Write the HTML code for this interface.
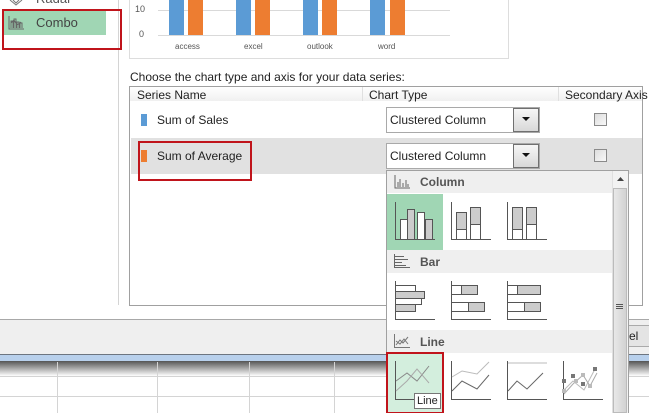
<!DOCTYPE html>
<html><head><style>
*{margin:0;padding:0;box-sizing:border-box}
html,body{width:649px;height:413px;overflow:hidden}
body{background:#fff;position:relative;font-family:"Liberation Sans",sans-serif;font-size:12px;color:#222}
.a{position:absolute}
.t{position:absolute;white-space:nowrap}
</style></head><body>
<div class="a" style="left:118px;top:0;width:1px;height:305px;background:#d4d4d4"></div>
<div class="t" style="left:36px;top:-9px;color:#555;font-size:13px">Radar</div>
<svg class="a" style="left:9px;top:0" width="14" height="6"><path d="M1 0 L7 5 L13 0 M4 0 L7 3 L10 0" stroke="#777" fill="none"/></svg>
<div class="a" style="left:3px;top:11px;width:103px;height:24px;background:#a0d6b4"></div>
<svg class="a" style="left:8px;top:16px" width="17" height="14"><path d="M1 0V13H16 M3 12V5h2v7 M6 12V3h2v9 M9 12V6h2v6 M12 12V7h2v5 M3 7 L6 4 L9 9 L13 6" stroke="#666" fill="none" stroke-width="1"/></svg>
<div class="t" style="left:36px;top:15px;font-size:13px;color:#444">Combo</div>
<div class="a" style="left:2px;top:9px;width:120px;height:41px;border:2px solid #c0141b"></div>

<div class="a" style="left:129px;top:-2px;width:380px;height:61px;border:1px solid #ddd"></div>
<div class="a" style="left:158px;top:10px;width:292px;height:1px;background:#d9d9d9"></div>
<div class="a" style="left:158px;top:35px;width:292px;height:1px;background:#d9d9d9"></div>
<div class="t" style="left:135px;top:4px;font-size:9px;color:#555">10</div>
<div class="t" style="left:139px;top:29px;font-size:9px;color:#555">0</div>
<div class="a" style="left:169px;top:0;width:15px;height:35px;background:#5b9bd5"></div>
<div class="a" style="left:188px;top:0;width:15px;height:35px;background:#ed7d31"></div>
<div class="a" style="left:236px;top:0;width:15px;height:35px;background:#5b9bd5"></div>
<div class="a" style="left:255px;top:0;width:15px;height:35px;background:#ed7d31"></div>
<div class="a" style="left:303px;top:0;width:15px;height:35px;background:#5b9bd5"></div>
<div class="a" style="left:322px;top:0;width:15px;height:35px;background:#ed7d31"></div>
<div class="a" style="left:370px;top:0;width:15px;height:35px;background:#5b9bd5"></div>
<div class="a" style="left:390px;top:0;width:15px;height:35px;background:#ed7d31"></div>
<div class="t" style="left:175px;top:42px;font-size:8px;color:#555">access</div>
<div class="t" style="left:244px;top:42px;font-size:8px;color:#555">excel</div>
<div class="t" style="left:307px;top:42px;font-size:8px;color:#555">outlook</div>
<div class="t" style="left:378px;top:42px;font-size:8px;color:#555">word</div>

<div class="t" style="left:130px;top:70px;font-size:12px">Choose the chart type and axis for your data series:</div>

<div class="a" style="left:129px;top:86px;width:514px;height:220px;border:1px solid #a0a0a0"></div>
<div class="a" style="left:130px;top:87px;width:512px;height:14px;background:linear-gradient(#fff,#f0f0f0)"></div>
<div class="a" style="left:362px;top:87px;width:1px;height:14px;background:#e0e0e0"></div>
<div class="a" style="left:558px;top:87px;width:1px;height:14px;background:#e0e0e0"></div>
<div class="t" style="left:137px;top:88px">Series Name</div>
<div class="t" style="left:369px;top:88px">Chart Type</div>
<div class="t" style="left:565px;top:88px">Secondary Axis</div>

<div class="a" style="left:141px;top:114px;width:6px;height:12px;background:#5b9bd5"></div>
<div class="t" style="left:157px;top:113px">Sum of Sales</div>
<div class="a" style="left:131px;top:138px;width:511px;height:36px;background:#e1e1e1"></div>
<div class="a" style="left:141px;top:150px;width:6px;height:12px;background:#ed7d31"></div>
<div class="t" style="left:157px;top:149px">Sum of Average</div>
<div class="a" style="left:138px;top:141px;width:114px;height:40px;border:2px solid #c0141b"></div>

<div class="a" style="left:386px;top:107px;width:154px;height:26px;border:1px solid #a9a9a9;background:#fff"></div>
<div class="t" style="left:390px;top:113px">Clustered Column</div>
<div class="a" style="left:513px;top:108px;width:26px;height:24px;border:1px solid #707070;background:linear-gradient(#f6f6f6,#d8d8d8)"></div>
<svg class="a" style="left:522px;top:117px" width="8" height="5"><path d="M0 0H8L4 4Z" fill="#111"/></svg>
<div class="a" style="left:386px;top:143px;width:154px;height:26px;border:1px solid #a9a9a9;background:#fff"></div>
<div class="t" style="left:390px;top:149px">Clustered Column</div>
<div class="a" style="left:513px;top:144px;width:26px;height:24px;border:1px solid #707070;background:linear-gradient(#f6f6f6,#d8d8d8)"></div>
<svg class="a" style="left:522px;top:153px" width="8" height="5"><path d="M0 0H8L4 4Z" fill="#111"/></svg>
<div class="a" style="left:594px;top:113px;width:13px;height:13px;border:1px solid #8a8a8a;background:linear-gradient(135deg,#ddd,#f8f8f8)"></div>
<div class="a" style="left:594px;top:149px;width:13px;height:13px;border:1px solid #8a8a8a;background:linear-gradient(135deg,#ddd,#f8f8f8)"></div>

<div class="a" style="left:0;top:319px;width:649px;height:1px;background:#a8a8a8"></div>
<div class="a" style="left:0;top:320px;width:649px;height:34px;background:#efefef"></div>
<div class="a" style="left:0;top:354px;width:649px;height:1px;background:#6d7580"></div>
<div class="a" style="left:0;top:355px;width:649px;height:6px;background:#b8d0ec"></div>
<div class="a" style="left:0;top:361px;width:649px;height:15px;background:linear-gradient(#555,#fff)"></div>
<div class="a" style="left:0;top:376px;width:649px;height:1px;background:#d4d4d4"></div>
<div class="a" style="left:0;top:396px;width:649px;height:1px;background:#d4d4d4"></div>
<div class="a" style="left:57px;top:362px;width:1px;height:51px;background:#d4d4d4"></div>
<div class="a" style="left:157px;top:362px;width:1px;height:51px;background:#d4d4d4"></div>
<div class="a" style="left:249px;top:362px;width:1px;height:51px;background:#d4d4d4"></div>
<div class="a" style="left:334px;top:362px;width:1px;height:51px;background:#d4d4d4"></div>
<div class="a" style="left:629px;top:325px;width:20px;height:22px;background:#e4e4e4;border-top:1px solid #aaa;border-bottom:1px solid #aaa"></div>
<div class="t" style="left:629px;top:329px;font-size:12px">el</div>

<div class="a" style="left:386px;top:170px;width:243px;height:243px;border:1px solid #a0a0a0;border-bottom:none;background:#fff"></div>
<div class="a" style="left:387px;top:171px;width:225px;height:22px;background:#efefef"></div>
<svg class="a" style="left:394px;top:175px" width="16" height="14"><path d="M1 0V13H16 M4 12V7 M6 12V4 M9 12V8 M12 12V5 M14 12V9" stroke="#666" fill="none"/></svg>
<div class="t" style="left:420px;top:175px;font-weight:bold;color:#555">Column</div>
<div class="a" style="left:387px;top:194px;width:56px;height:56px;background:#a0d6b4"></div>
<svg class="a" style="left:387px;top:193px" width="225" height="57">
<g stroke="#555" fill="none">
<path d="M8.5 9V46.5H48"/><rect x="13.5" y="26.5" width="7" height="20" fill="#fff"/><rect x="20.5" y="16.5" width="7" height="30" fill="#ccc"/><rect x="30.5" y="19.5" width="7" height="27" fill="#fff"/><rect x="38.5" y="26.5" width="7" height="20" fill="#ccc"/>
<path d="M64.5 9V46.5H104"/><rect x="69.5" y="19.5" width="10" height="17" fill="#ccc"/><rect x="69.5" y="36.5" width="10" height="10" fill="#fff"/><rect x="83.5" y="14.5" width="10" height="17" fill="#ccc"/><rect x="83.5" y="31.5" width="10" height="15" fill="#fff"/>
<path d="M120.5 9V46.5H160"/><rect x="125.5" y="14.5" width="10" height="22" fill="#ccc"/><rect x="125.5" y="36.5" width="10" height="10" fill="#fff"/><rect x="139.5" y="14.5" width="10" height="17" fill="#ccc"/><rect x="139.5" y="31.5" width="10" height="15" fill="#fff"/>
</g></svg>
<div class="a" style="left:387px;top:250px;width:225px;height:23px;background:#efefef"></div>
<svg class="a" style="left:394px;top:254px" width="16" height="14"><path d="M0.5 0V13.5H16 M1 2.5H10 M1 5.5H14 M1 8.5H8 M1 11.5H12" stroke="#666" fill="none"/></svg>
<div class="t" style="left:420px;top:255px;font-weight:bold;color:#555">Bar</div>
<svg class="a" style="left:387px;top:273px" width="225" height="57">
<g stroke="#555" fill="none">
<path d="M8.5 8V46.5H48"/><rect x="8.5" y="12.5" width="20" height="6" fill="#fff"/><rect x="8.5" y="18.5" width="29" height="7" fill="#ccc"/><rect x="8.5" y="25.5" width="26" height="6" fill="#fff"/><rect x="8.5" y="31.5" width="20" height="7" fill="#ccc"/>
<path d="M64.5 8V46.5H104"/><rect x="64.5" y="12.5" width="10" height="9" fill="#fff"/><rect x="74.5" y="12.5" width="16" height="9" fill="#ccc"/><rect x="64.5" y="29.5" width="17" height="9" fill="#fff"/><rect x="81.5" y="29.5" width="16" height="9" fill="#ccc"/>
<path d="M120.5 8V46.5H160"/><rect x="120.5" y="12.5" width="10" height="9" fill="#fff"/><rect x="130.5" y="12.5" width="23" height="9" fill="#ccc"/><rect x="120.5" y="29.5" width="17" height="9" fill="#fff"/><rect x="137.5" y="29.5" width="16" height="9" fill="#ccc"/>
</g></svg>
<div class="a" style="left:387px;top:330px;width:225px;height:23px;background:#efefef"></div>
<svg class="a" style="left:394px;top:334px" width="16" height="14"><path d="M0.5 0V13.5H16 M2 11L6 6L9 9L14 3 M2 7L6 10L10 5L14 10" stroke="#777" fill="none"/></svg>
<div class="t" style="left:420px;top:335px;font-weight:bold;color:#555">Line</div>
<div class="a" style="left:388px;top:354px;width:55px;height:59px;background:#d3eedd"></div>
<svg class="a" style="left:387px;top:353px" width="225" height="60">
<g fill="none">
<path d="M8.5 8V46.5H48" stroke="#555"/><path d="M9 28L20 20L30 28L42 13" stroke="#888"/><path d="M9 38L20 28L30 16L42 30" stroke="#aaa"/>
<path d="M64.5 8V46.5H104" stroke="#555"/><path d="M65 24L75 18L90 21L102 9" stroke="#bbb"/><path d="M65 38L75 28L90 36L102 22" stroke="#666"/>
<path d="M120.5 8V46.5H160" stroke="#555"/><path d="M121 10H160" stroke="#bbb"/><path d="M121 38L130 28L140 36L156 20" stroke="#666"/>
<path d="M176.5 8V46.5H216" stroke="#555"/><path d="M177 37L186 28L197 37L208 16" stroke="#bbb"/><path d="M177 41L186 31L196 22L203 33L210 20" stroke="#aaa"/>
<g fill="#777"><rect x="175" y="26" width="4" height="4"/><rect x="184" y="21" width="4" height="4"/><rect x="194" y="29" width="4" height="4"/><rect x="206" y="14" width="4" height="4"/></g>
<g fill="#bbb"><rect x="175" y="36" width="4" height="4"/><rect x="187" y="26" width="4" height="4"/><rect x="194" y="20" width="4" height="4"/><rect x="201" y="31" width="4" height="4"/></g>
</g></svg>
<div class="a" style="left:386px;top:352px;width:58px;height:62px;border:2px solid #c0141b"></div>
<div class="a" style="left:414px;top:393px;width:27px;height:16px;border:1px solid #767676;background:#fff"></div>
<div class="t" style="left:417px;top:395px;font-size:11px">Line</div>
<div class="a" style="left:612px;top:171px;width:16px;height:242px;background:#f2f2f2;border-left:1px solid #e0e0e0"></div>
<svg class="a" style="left:617px;top:177px" width="7" height="4"><path d="M0 4H7L3.5 0Z" fill="#444"/></svg>
<div class="a" style="left:613px;top:188px;width:14px;height:225px;background:linear-gradient(90deg,#e8e8e8,#d2d2d2);border:1px solid #bbb"></div>
<div class="a" style="left:616px;top:304px;width:7px;height:1px;background:#555;box-shadow:0 2px 0 #555,0 4px 0 #555"></div>
</body></html>
